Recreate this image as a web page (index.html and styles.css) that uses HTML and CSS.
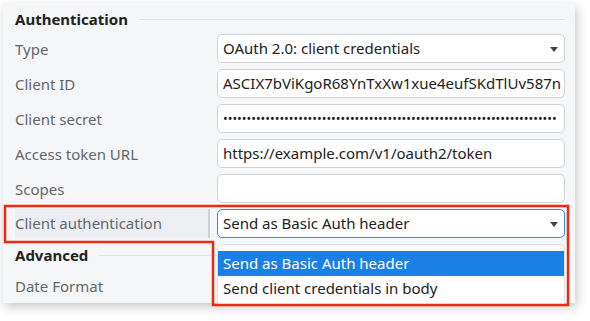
FILE: index.html
```html
<!DOCTYPE html>
<html lang="en">
<head>
  <meta charset="UTF-8" />
  <title>Connection settings</title>
  <link rel="stylesheet" href="styles.css">
</head>
<body>

<div class="panel">
  <div class="heading"><span>Authentication</span></div>

  <div class="row">
    <div class="label">Type</div>
    <div class="field select">OAuth 2.0: client credentials<span class="arrow"></span></div>
  </div>

  <div class="row">
    <div class="label">Client ID</div>
    <div class="field">ASCIX7bViKgoR68YnTxXw1xue4eufSKdTlUv587n</div>
  </div>

  <div class="row">
    <div class="label">Client secret</div>
    <div class="field secret">•••••••••••••••••••••••••••••••••••••••••••••••••••••••••••••••••••••••</div>
  </div>

  <div class="row">
    <div class="label">Access token URL</div>
    <div class="field">https://example.com/v1/oauth2/token</div>
  </div>

  <div class="row">
    <div class="label">Scopes</div>
    <div class="field"></div>
  </div>

  <div class="row active">
    <div class="label">Client authentication</div>
    <div class="field select focus">Send as Basic Auth header<span class="arrow"></span>
      <!-- open dropdown -->
      <div class="menu">
        <div class="option selected">Send as Basic Auth header</div>
        <div class="option">Send client credentials in body</div>
      </div>
    </div>
  </div>

  <div class="heading adv"><span>Advanced</span></div>

  <div class="row">
    <div class="label">Date Format</div>
    <div class="field blank"></div>
  </div>

  <!-- annotation outline -->
  <svg class="mark" width="590" height="321" viewBox="0 0 590 321">
    <path d="M5 206 H568 V305 H213 V242 H5 Z" fill="none" stroke="#eb2a12" stroke-width="2.5" />
  </svg>
</div>

</body>
</html>
```

FILE: styles.css
```css
* { box-sizing: border-box; margin: 0; padding: 0; }

body {
  font-family: 'Noto Sans', 'Open Sans', sans-serif;
  background: #ffffff;
  width: 590px;
  height: 321px;
  overflow: hidden;
}

.panel {
  margin: 3px 0 0 3px;
  width: 572px;
  height: 300px;
  padding: 5px 10px 0 12px;
  background: #f5f6f8;
  box-shadow: 2px 4px 10px rgba(0,0,0,0.22);
}

.heading {
  display: flex;
  align-items: center;
  height: 22px;
  margin-bottom: 4px;
  font-size: 15px;
  font-weight: 700;
  color: #222;
}

.heading::after {
  content: '';
  flex: 1;
  height: 1px;
  background: #dfe1e5;
  margin-left: 11px;
}

.heading.adv { margin-top: 5px; margin-bottom: 5px; }

.row {
  display: flex;
  align-items: center;
  height: 29px;
  margin-bottom: 6px;
}

.label {
  width: 202px;
  flex-shrink: 0;
  font-size: 15px;
  color: #62666b;
}

.field {
  position: relative;
  flex: 1;
  height: 29px;
  line-height: 27px;
  padding: 0 5px;
  background: #fff;
  border: 1px solid #cfd2d6;
  border-radius: 5px;
  font-size: 15px;
  color: #222;
  white-space: nowrap;
  overflow: hidden;
}

.field.blank { visibility: hidden; }

.secret {
  font-size: 12.5px;
  color: #222;
}

.select { overflow: visible; }

.arrow {
  position: absolute;
  right: 6px;
  top: 12px;
  width: 0;
  height: 0;
  border-left: 4px solid transparent;
  border-right: 4px solid transparent;
  border-top: 5px solid #444;
}

.focus { border-color: #3a8be4; }

/* Highlighted row */
.row.active .label {
  height: 29px;
  line-height: 29px;
  width: 195px;
  margin-right: 7px;
  background: #eceef1;
  border-right: 2px solid #cfd1d4;
}

.menu {
  position: absolute;
  left: -1px;
  right: -1px;
  top: 34px;
  height: 62px;
  padding-top: 6px;
  background: #fff;
  border: 1px solid #dcdfe3;
  border-radius: 5px 5px 0 0;
  z-index: 2;
}

.option {
  height: 25px;
  line-height: 25px;
  padding: 0 5px;
  font-size: 15px;
  color: #222;
}

.option.selected {
  background: #1b7fe8;
  color: #fff;
}

.mark {
  position: absolute;
  left: 0;
  top: 0;
  z-index: 3;
  pointer-events: none;
}
```
